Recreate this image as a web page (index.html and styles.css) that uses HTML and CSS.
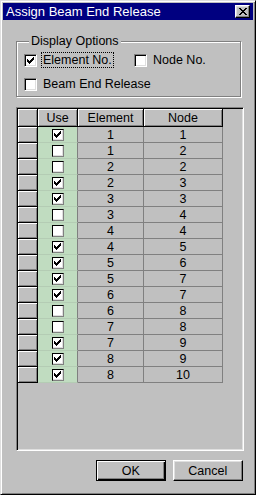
FILE: index.html
```html
<!DOCTYPE html>
<html>
<head>
<meta charset="utf-8">
<link rel="stylesheet" href="styles.css">
</head>
<body>
<div class="window">
  <div class="titlebar">
    <span class="title">Assign Beam End Release</span>
    <span class="close"><svg width="8" height="7" viewBox="0 0 8 7" shape-rendering="crispEdges"><path d="M0 0h2v1h-2z M6 0h2v1h-2z M1 1h2v1h-2z M5 1h2v1h-2z M2 2h4v1h-4z M3 3h2v1h-2z M2 4h4v1h-4z M1 5h2v1h-2z M5 5h2v1h-2z M0 6h2v1h-2z M6 6h2v1h-2z" fill="#000"/></svg></span>
  </div>
  <fieldset class="group">
    <legend>Display Options</legend>
    <div class="opt-row">
      <label class="opt opt-wide"><span class="cb"><svg class="ck" width="7" height="7" viewBox="0 0 7 7" shape-rendering="crispEdges"><path d="M6 0h1v1h-1z M5 1h2v1h-2z M0 2h1v1h-1z M4 2h3v1h-3z M0 3h2v1h-2z M3 3h3v1h-3z M0 4h5v1h-5z M1 5h3v1h-3z M2 6h1v1h-1z" fill="#000"/></svg></span><span class="lbl focus">Element No.</span></label>
      <label class="opt"><span class="cb"></span><span class="lbl">Node No.</span></label>
    </div>
    <div class="opt-row">
      <label class="opt"><span class="cb"></span><span class="lbl">Beam End Release</span></label>
    </div>
  </fieldset>
  <div class="gridframe">
    <div class="grid" id="grid">
      <div class="hc"></div><div class="hc">Use</div><div class="hc">Element</div><div class="hc">Node</div>
    </div>
  </div>
  <div class="buttons">
    <button class="btn btn-default">OK</button>
    <button class="btn">Cancel</button>
  </div>
</div>
<script src="script.js"></script>
</body>
</html>
```

FILE: styles.css
```css
html, body {
  margin: 0;
  padding: 0;
  background: #c0c0c0;
}
body {
  font-family: "Liberation Sans", Arial, sans-serif;
  font-size: 12.5px;
  color: #000;
}
.window {
  width: 256px;
  height: 495px;
  box-sizing: border-box;
  background: #c0c0c0;
  border: 1px solid;
  border-color: #dfdfdf #000 #000 #dfdfdf;
  box-shadow: inset 1px 1px 0 #fff, inset -1px -1px 0 #808080;
  padding: 2px;
  display: flex;
  flex-direction: column;
}
.titlebar {
  height: 17px;
  background: #000080;
  color: #fff;
  display: flex;
  align-items: center;
  justify-content: space-between;
  padding-left: 3px;
  padding-right: 3px;
  flex-shrink: 0;
}
.title {
  font-size: 13px;
  line-height: 17px;
  white-space: nowrap;
}
.close {
  width: 15px;
  height: 13px;
  box-sizing: border-box;
  background: #c0c0c0;
  border: 1px solid;
  border-color: #fff #000 #000 #fff;
  box-shadow: inset -1px -1px 0 #808080, inset 1px 1px 0 #dfdfdf;
  display: flex;
  align-items: center;
  justify-content: center;
}
.close svg { display: block; }
.group {
  margin: 14px 0 0 13px;
  width: 225px;
  box-sizing: border-box;
  border: 1px solid #808080;
  box-shadow: inset 1px 1px 0 #fff, 1px 1px 0 #fff;
  padding: 4px 6px 4px 7px;
  min-width: 0;
}
.group legend {
  padding: 0 2px;
  margin-left: 5px;
  line-height: 14px;
  background: #c0c0c0;
  white-space: nowrap;
}
.opt-row {
  display: flex;
  height: 16px;
  align-items: center;
}
.opt-row + .opt-row {
  margin-top: 8px;
}
.opt {
  display: flex;
  align-items: center;
}
.opt-wide {
  width: 110px;
}
.cb {
  width: 13px;
  height: 13px;
  box-sizing: border-box;
  background: #fff;
  border: 1px solid;
  border-color: #808080 #fff #fff #808080;
  box-shadow: inset 1px 1px 0 #000, inset -1px -1px 0 #dfdfdf;
  display: flex;
  align-items: center;
  justify-content: center;
  flex-shrink: 0;
}
.ck { display: block; }
.lbl {
  margin-left: 5px;
  padding: 0 1px;
  line-height: 14px;
  white-space: nowrap;
}
.focus {
  outline: 1px dotted #000;
}
.gridframe {
  margin: 10px 0 0 13px;
  width: 228px;
  height: 344px;
  box-sizing: border-box;
  border: 1px solid;
  border-color: #808080 #fff #fff #808080;
  box-shadow: inset 1px 1px 0 #000, inset -1px -1px 0 #dfdfdf;
  padding: 1px;
  flex-shrink: 0;
}
.grid {
  display: grid;
  grid-template-columns: 20px 40px 66px 79px;
  grid-template-rows: 18px;
  grid-auto-rows: 16px;
}
.hc, .rh {
  box-sizing: border-box;
  background: #c0c0c0;
  border-right: 1px solid #000;
  border-bottom: 1px solid #000;
  box-shadow: inset 1px 1px 0 #fff, inset -1px -1px 0 #808080;
  display: flex;
  align-items: center;
  justify-content: center;
  white-space: nowrap;
}
.use {
  box-sizing: border-box;
  background: #c0dcc0;
  border-right: 1px solid #808080;
  border-bottom: 1px solid #b4ccb4;
  display: flex;
  align-items: center;
  justify-content: center;
}
.num {
  box-sizing: border-box;
  border-right: 1px solid #808080;
  border-bottom: 1px solid #808080;
  display: flex;
  align-items: center;
  justify-content: center;
  line-height: 14px;
}
.gcb {
  width: 12px;
  height: 12px;
  box-sizing: border-box;
  background: #fff;
  border: 1px solid;
  border-color: #000 #808080 #808080 #000;
  box-shadow: inset -1px -1px 0 #dfdfdf;
  display: flex;
  align-items: center;
  justify-content: center;
}
.buttons {
  margin: 9px 10px 0 0;
  display: flex;
  justify-content: flex-end;
  gap: 7px;
  padding-left: 93px;
}
.btn {
  font-family: "Liberation Sans", Arial, sans-serif;
  font-size: 12.5px;
  color: #000;
  height: 21px;
  box-sizing: border-box;
  background: #c0c0c0;
  border: 1px solid;
  border-color: #fff #000 #000 #fff;
  box-shadow: inset -1px -1px 0 #808080, inset 1px 1px 0 #dfdfdf;
  padding: 0;
  margin: 0;
  width: 71px;
}
.btn-default {
  width: 70px;
  border-color: #000;
  box-shadow: inset 1px 1px 0 #fff, inset -1px -1px 0 #000, inset -2px -2px 0 #808080;
}
```

FILE: script.js
```js
var rows = [
  [1,1,1],[0,1,2],[0,2,2],[1,2,3],[1,3,3],[0,3,4],[0,4,4],[1,4,5],
  [1,5,6],[1,5,7],[1,6,7],[0,6,8],[0,7,8],[1,7,9],[1,8,9],[1,8,10]
];
var check = '<svg width="7" height="7" viewBox="0 0 7 7" shape-rendering="crispEdges" style="display:block"><path d="M6 0h1v1h-1z M5 1h2v1h-2z M0 2h1v1h-1z M4 2h3v1h-3z M0 3h2v1h-2z M3 3h3v1h-3z M0 4h5v1h-5z M1 5h3v1h-3z M2 6h1v1h-1z" fill="#000"/></svg>';
var g = document.getElementById('grid');
var html = '';
rows.forEach(function (r) {
  html += '<div class="rh"></div>';
  html += '<div class="use"><span class="gcb">' + (r[0] ? check : '') + '</span></div>';
  html += '<div class="num">' + r[1] + '</div>';
  html += '<div class="num">' + r[2] + '</div>';
});
g.insertAdjacentHTML('beforeend', html);
```
